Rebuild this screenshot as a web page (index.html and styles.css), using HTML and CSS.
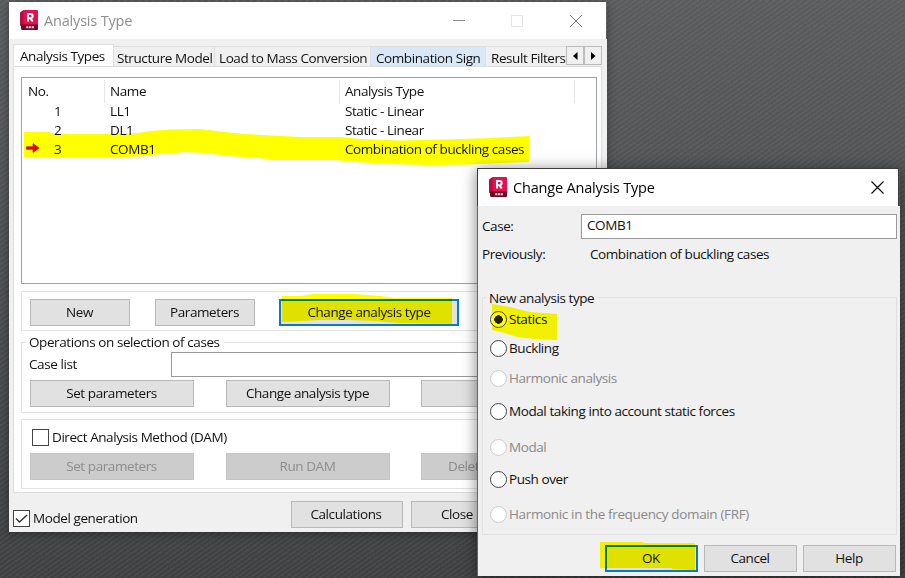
FILE: index.html
```html
<!DOCTYPE html>
<html lang="en">
<head>
<meta charset="utf-8">
<title>Analysis Type</title>
<link rel="stylesheet" href="styles.css">
</head>
<body>
<svg class="defs" width="0" height="0">
  <symbol id="logo" viewBox="0 0 19 21">
    <path fill="#b5103c" d="M1 3 4 0v16l-3 1z"/>
    <path fill="#e51050" d="M3.500 0H17a1 1 0 0 1 1 1v14H3z"/>
    <path fill="#ba0c40" d="M0 2.500 3.500 0v15L0 16z"/>
    <path fill="#6d0a24" d="M1 14.500h17V19a1 1 0 0 1-1 1H2.500A1.500 1.500 0 0 1 1 18.500z"/>
    <path fill="none" stroke="#fff" stroke-width="2" d="M8 11.500V4h2.600a2 2 0 0 1 0 4.200H8m2.500 0 2.200 3.300"/>
    <path stroke="#e3c7ce" stroke-width="2" stroke-dasharray="2.200 .6" d="M6.200 17.300h7.800"/>
  </symbol>
</svg>
<div class="desktop">
  <section class="window main-window">
    <header class="titlebar">
      <svg class="logo"><use href="#logo"/></svg>
      <h1>Analysis Type</h1>
      <svg class="caption" width="130" height="14" viewBox="0 0 130 14" fill="none">
        <path stroke="#8c8c8c" d="M1 6.500h12"/>
        <path stroke="#e4e4e4" d="M59.500 1.500h11v11h-11z"/>
        <path stroke="#777" d="m118 1 12 12m0-12-12 12"/>
      </svg>
    </header>
    <div class="body">
      <nav class="tabs">
        <span class="tab active">Analysis Types</span>
        <span class="tab t2">Structure Model</span>
        <span class="tab t3">Load to Mass Conversion</span>
        <span class="tab t4">Combination Sign</span>
        <span class="tab t5">Result Filters</span>
        <span class="scroll"><svg width="18" height="18"><path d="M11.500 5v8L7 9z"/></svg></span>
        <span class="scroll"><svg width="18" height="18"><path d="M7 5v8l4.500-4z"/></svg></span>
      </nav>
      <div class="panel">
        <div class="list">
          <div class="row head"><span>No.</span><span>Name</span><span>Analysis Type</span><span></span></div>
          <div class="row"><span class="num">1</span><span>LL1</span><span>Static - Linear</span></div>
          <div class="row"><span class="num">2</span><span>DL1</span><span>Static - Linear</span></div>
          <div class="row"><span class="num"><svg class="arrow" width="14" height="10"><path fill="#f00000" stroke="#b00" stroke-width=".6" d="M.5 3.700H7V.6l6 4.400-6 4.400V6.300H.5z"/></svg>3</span><span>COMB1</span><span>Combination of buckling cases</span></div>
        </div>
        <div class="group actions">
          <button class="w100">New</button>
          <button class="w100">Parameters</button>
          <button class="w180 default">Change analysis type</button>
        </div>
        <div class="group operations">
          <span class="legend">Operations on selection of cases</span>
          <div class="field"><span>Case list</span><span class="input"></span></div>
          <div class="buttons"><button>Set parameters</button><button>Change analysis type</button><button></button></div>
        </div>
        <div class="group dam">
          <label class="check"><i class="box"></i>Direct Analysis Method (DAM)</label>
          <div class="buttons"><button disabled>Set parameters</button><button disabled>Run DAM</button><button class="delete" disabled>Delete</button></div>
        </div>
      </div>
      <footer class="footer">
        <label class="check"><i class="box"><svg width="15" height="15"><path fill="none" stroke="#333" stroke-width="1.500" d="m2 7.500 3.500 3.500L13 4"/></svg></i>Model generation</label>
        <button class="calc">Calculations</button>
        <button class="close">Close</button>
      </footer>
    </div>
    <svg class="marker" width="597" height="530" viewBox="9 2 597 530">
      <path d="M24 132h26v1l22 1h38l27-1 13-2 20-1.500 30-.5 25 3 20 2 55 3h40l20 2 40 1.500 60-1.500 30-1 39-2v26l-29 1-30 1.500-40 .5-40-1-35-2-20-2h-62l-13-2-30-2-25-3-20-1-25 2-15 2-30 1.500H75L53 157H24z"/>
      <path d="M282 296h18l13-2h42l25 2 15 2h57v26l-52-1-25-2-25-1h-30l-20 1-18 1z"/>
    </svg>
  </section>
  <section class="window dialog">
    <header class="titlebar">
      <svg class="logo"><use href="#logo"/></svg>
      <h1>Change Analysis Type</h1>
      <svg class="caption" width="13" height="13"><path stroke="#000" stroke-width="1.100" d="m.5.5 12 12m0-12-12 12"/></svg>
    </header>
    <div class="body">
      <div class="field case"><span>Case:</span><span class="input">COMB1</span></div>
      <div class="field previous"><span>Previously:</span><span>Combination of buckling cases</span></div>
      <div class="group types">
        <span class="legend">New analysis type</span>
        <label class="radio on"><i></i>Statics</label>
        <label class="radio r2"><i></i>Buckling</label>
        <label class="radio r3 off"><i></i>Harmonic analysis</label>
        <label class="radio r4"><i></i>Modal taking into account static forces</label>
        <label class="radio r5 off"><i></i>Modal</label>
        <label class="radio r6"><i></i>Push over</label>
        <label class="radio r7 off"><i></i>Harmonic in the frequency domain (FRF)</label>
      </div>
      <footer class="footer"><button class="default">OK</button><button>Cancel</button><button>Help</button></footer>
    </div>
    <svg class="marker" width="423" height="408" viewBox="477 168 423 408">
      <path d="m492 304 18 3 20 5 27 2v26l-22-1-18-2-12-4-13-3z"/>
      <path d="M600 542h43v1h52v27l-23-1v-1h-72z"/>
    </svg>
  </section>
</div>
</body>
</html>
```
FILE: styles.css
```css
* { box-sizing: border-box; }
body { margin: 0; font: 13.5px/19px "Open Sans", "Noto Sans", sans-serif; letter-spacing: -.42px; color: #111; }
.defs { position: absolute; }
.desktop {
  position: relative; width: 905px; height: 578px; overflow: hidden;
  background: repeating-linear-gradient(145deg, rgba(255,255,255,.05) 0 1.500px, transparent 1.500px 4px), linear-gradient(#5b5c5e, #3f4042);
}
.window { position: absolute; display: flex; flex-direction: column; }
.main-window { left: 9px; top: 2px; width: 598px; height: 530px; box-shadow: 0 2px 9px rgba(0,0,0,.35); }
.dialog { left: 477px; top: 168px; width: 423px; height: 408px; box-shadow: 0 2px 14px rgba(0,0,0,.5); }
.titlebar { display: flex; flex-shrink: 0; align-items: center; height: 37px; margin-right: 1px; padding: 0 24px 0 11px; background: #fff; }
.titlebar h1 { flex: 1; margin: 0 0 0 5px; font-size: 14.5px; font-weight: 400; letter-spacing: -.18px; color: #8f8f8f; }
.logo { width: 19px; height: 21px; }
.body { flex: 1; display: flex; flex-direction: column; background: #f0f0f0; }
.main-window .body { padding: 5px 5px 0 4px; }
.tabs { display: flex; flex-shrink: 0; height: 22px; align-items: flex-end; white-space: nowrap; }
.tab { height: 20px; line-height: 22px; padding-left: 4px; border: 1px solid #dedede; border-width: 1px 1px 0 0; overflow: hidden; }
.tab.active { width: 101px; height: 22px; line-height: 22px; padding-left: 6px; border-left-width: 1px; background: #fff; }
.t2 { width: 101px; padding-left: 3px; }
.t3 { width: 156px; }
.t4 { width: 115px; padding-left: 5px; background: #d8e8f8; }
.t5 { width: 80px; padding-left: 5px; border-right: 0; }
.scroll { width: 18px; height: 19px; align-self: flex-start; margin-top: 2px; border: 1px solid #bbb; background: #f0f0f0; }
.scroll svg { display: block; margin: 0 -1px; }
.panel { flex-shrink: 0; height: 427px; padding: 10px 4px 4px 7px; border: 1px solid #dcdcdc; background: #fff; }
.list { height: 207px; border: 1px solid #9da2aa; padding-top: 2px; }
.row { display: grid; grid-template-columns: 83px 235px 235px 1fr; height: 19px; line-height: 20px; }
.row span { padding-left: 5px; }
.row span:first-child { padding-left: 6px; }
.row .num:first-child { position: relative; padding-left: 32px; }
.head { height: 21px; line-height: 23px; }
.head span { border-right: 1px solid #e5e5e5; }
.head span:last-child { border: 0; }
.arrow { position: absolute; left: 4px; top: 4px; }
.group { border: 1px solid #e1e1e1; }
.actions { display: flex; height: 40px; margin-top: 7px; padding: 7px 8px 4px; }
button { height: 27px; padding: 0; font: inherit; letter-spacing: inherit; color: inherit; border: 1px solid #b8b8b8; background: #e1e1e1; white-space: nowrap; }
button:disabled { color: #8d8d8d; background: #ccc; border-color: #c4c4c4; }
button.default { border: 2px solid #0878d4; }
.w100 { width: 100px; margin-right: 25px; padding-right: 1px; }
.w180 { width: 180px; margin-left: -1px; }
.operations { position: relative; height: 71px; margin-top: 11px; padding: 9px 0 0 8px; }
.legend { position: absolute; left: 4px; top: -10px; padding: 0 3px; background: #fff; white-space: nowrap; }
.field { display: flex; }
.input { border: 1px solid #9a9a9a; background: #fff; }
.operations .field { height: 25px; line-height: 25px; margin-left: -1px; }
.operations .field span:first-child { width: 142px; }
.operations .input { flex: 1; }
.buttons { display: flex; gap: 32px; overflow: hidden; }
.buttons button { flex: 0 0 164px; margin: 0; padding-right: 1px; }
.buttons button:last-child { margin-left: -1px; }
.operations .buttons { margin-top: 3px; }
.buttons .delete { text-align: left; padding-left: 26px; }
.dam { height: 70px; margin-top: 6px; padding: 8px 0 0 8px; }
.check { display: flex; align-items: center; gap: 3px; height: 18px; }
.box { width: 17px; height: 17px; border: 1px solid #444; background: #fff; }
.box svg { display: block; }
.dam .check { padding-left: 2px; margin-bottom: 7px; }
.main-window .footer { display: flex; margin-top: 8px; }
.main-window .footer .check { width: 278px; margin-top: 8px; }
.calc { width: 112px; padding-right: 2px; }
.close { width: 93px; margin-left: 8px; padding-right: 1px; }
.marker { position: absolute; left: 0; top: 0; fill: #ff0; mix-blend-mode: multiply; pointer-events: none; }
.dialog .titlebar { height: 38px; margin-right: 1px; border: solid #3a3a3a; border-width: 1px 1px 0 1px; padding-right: 14px; }
.dialog h1 { color: #000; }
.dialog .body { border-left: 1px solid #666; padding: 8px 3px 4px 4px; }
.case { height: 25px; line-height: 24px; }
.case span:first-child, .previous span:first-child { width: 99px; }
.case .input { flex: 1; padding-left: 5px; line-height: 21px; }
.previous { margin-top: 6px; }
.previous span:first-child { width: 108px; }
.types { position: relative; height: 238px; margin-top: 33px; padding: 12px 0 0 7px; }
.types .legend { left: 3px; top: -9px; background: #f0f0f0; }
.radio { display: flex; align-items: center; gap: 2px; height: 18px; }
.radio i { width: 17px; height: 17px; border: 1px solid #444; border-radius: 50%; background: #fff; }
.radio.on i { background: radial-gradient(circle, #222 0 4px, #fff 4.500px); }
.radio.off { color: #8a8a8a; }
.radio.off i { border-color: #ccc; }
.r2 { margin-top: 11px; } .r3 { margin-top: 12px; } .r4 { margin-top: 15px; }
.r5 { margin-top: 18px; } .r6 { margin-top: 14px; } .r7 { margin-top: 17px; letter-spacing: -.35px; }
.dialog .footer { display: flex; gap: 6px; margin: 10px 0 0 123px; }
.dialog .footer button { width: 93px; padding-right: 1px; }
```
